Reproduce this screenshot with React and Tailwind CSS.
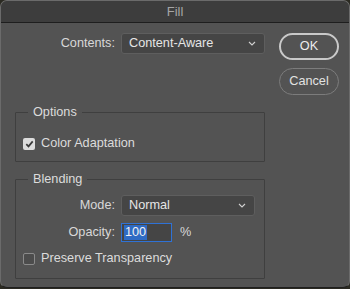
import React from 'react';

const Chevron = () => (
  <svg width="8" height="5" viewBox="0 0 8 5" className="text-[#cfcfcf]">
    <path d="M1 1l3 3 3-3" fill="none" stroke="currentColor" strokeWidth="1.1" />
  </svg>
);

const Select = ({ value, className }) => (
  <div className={`flex items-center justify-between rounded-[3px] border border-[#5e5e5e] bg-[#454545] pl-[7px] pr-[8px] text-[12.7px] text-[#e6e6e6] ${className}`}>
    <span>{value}</span>
    <Chevron />
  </div>
);

const Group = ({ title, className, children }) => (
  <fieldset className={`relative mx-[14px] rounded-[1px] border border-[#3f3f3f] ${className}`}>
    <legend className="ml-[12px] px-[5px] text-[12.7px] leading-[14px] text-[#dcdcdc]">{title}</legend>
    {children}
  </fieldset>
);

const App = () => {
  return (
    <div className="h-[289px] w-[350px] bg-[#2b2a22] font-['Liberation_Sans',sans-serif]">
      <div className="h-[288px] w-[350px] overflow-hidden rounded-[7px] border border-[#6b6b6b] border-b-[#1f1f1f] bg-[#535353]">
        <div className="flex h-[22px] items-center justify-center border-b border-[#1e1e1e] bg-[#3d3d3d] text-[13px] text-[#a5a5a5]">
          Fill
        </div>
        <div className="flex">
          <div className="w-[278px]">
            <div className="mt-[10px] flex h-[21px] items-center">
              <span className="w-[114px] text-right text-[12.7px] text-[#d8d8d8]">Contents:</span>
              <Select value="Content-Aware" className="ml-[6px] h-[21px] w-[144px]" />
            </div>
            <Group title="Options" className="mt-[51px] h-[57px]">
              <div className="mt-[15px] flex items-center pl-[7px]">
                <span className="flex h-[12px] w-[12px] items-center justify-center rounded-[2px] bg-[#dcdcdc]">
                  <svg width="9" height="8" viewBox="0 0 9 8">
                    <path d="M1.3 4.2l2.2 2.2 4.2-5" fill="none" stroke="#3a3a3a" strokeWidth="1.7" />
                  </svg>
                </span>
                <span className="ml-[6px] text-[12.7px] text-[#dcdcdc]">Color Adaptation</span>
              </div>
            </Group>
            <Group title="Blending" className="mt-[10px] h-[107px]">
              <div className="mt-[9px] flex h-[21px] items-center">
                <span className="w-[99px] text-right text-[12.7px] text-[#d8d8d8]">Mode:</span>
                <Select value="Normal" className="ml-[6px] h-[21px] w-[134px]" />
              </div>
              <div className="mt-[7px] flex h-[19px] items-center">
                <span className="w-[99px] text-right text-[12.7px] text-[#d8d8d8]">Opacity:</span>
                <div className="ml-[6px] flex h-[19px] w-[51px] items-center border border-[#2f72d6] bg-[#454545] pl-[2px]">
                  <span className="bg-[#2f6bc4] px-[1px] text-[12.7px] leading-[15px] text-[#f2f2f2]">100</span>
                </div>
                <span className="ml-[8px] text-[12.7px] text-[#d8d8d8]">%</span>
              </div>
              <div className="mt-[7px] flex items-center pl-[7px]">
                <span className="h-[12px] w-[12px] rounded-[2px] border border-[#8a8a8a] bg-[#4c4c4c]" />
                <span className="ml-[6px] text-[12.7px] text-[#dcdcdc]">Preserve Transparency</span>
              </div>
            </Group>
          </div>
          <div className="flex flex-col">
            <button className="mt-[10px] h-[27px] w-[60px] rounded-full border-2 border-[#c9c9c9] text-[12.7px] text-[#ececec]">
              OK
            </button>
            <button className="mt-[8px] h-[27px] w-[60px] rounded-full border border-[#7c7c7c] text-[12.7px] text-[#e2e2e2]">
              Cancel
            </button>
          </div>
        </div>
      </div>
    </div>
  );
};

export default App;
